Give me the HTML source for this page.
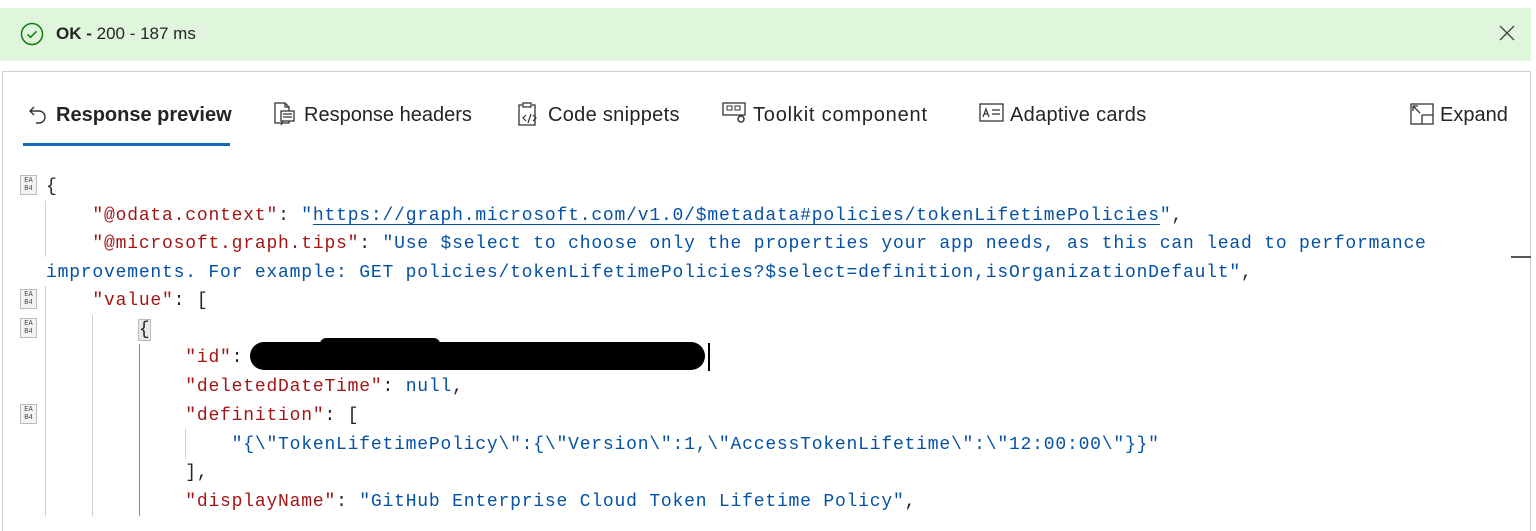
<!DOCTYPE html>
<html><head><meta charset="utf-8"><style>
*{margin:0;padding:0;box-sizing:border-box}
body{width:1536px;height:515px;background:#fff;position:relative;overflow:hidden;font-family:"Liberation Sans",sans-serif;color:#242424}
.banner{position:absolute;left:0;top:8px;width:1531px;height:53px;background:#dff6dd}
.panel{position:absolute;left:2px;top:71px;width:1529px;height:460px;border:1px solid #d1d1d1;border-bottom:none}
.tab{position:absolute;top:102px;font-size:20px;white-space:nowrap;line-height:26px}
.code{position:absolute;font-family:"Liberation Mono",monospace;font-size:18px;letter-spacing:0.8px;white-space:pre;line-height:28px}
.k{color:#a31515}.s{color:#0451a5}
.fold{position:absolute;left:20px;width:17px;height:20px;border:1px solid #bbb;background:#f3f3f3;font-size:7px;line-height:8px;font-family:"Liberation Mono",monospace;text-align:center;color:#444;padding-top:1px}
.g{position:absolute;width:1px;background:#d0d0d0}
</style></head><body>
<div class="banner"></div>
<svg style="position:absolute;left:20px;top:22px" width="24" height="24" viewBox="0 0 24 24"><circle cx="12" cy="12" r="10.5" fill="none" stroke="#107c10" stroke-width="1.5"/><path d="M7.5 12.3l3 3 6-6" fill="none" stroke="#107c10" stroke-width="1.5"/></svg>
<div style="position:absolute;left:56px;top:24px;font-size:17px;line-height:20px"><b>OK -</b> 200 - 187 ms</div>
<svg style="position:absolute;left:1499px;top:25px" width="16" height="16"><path d="M1 1L15 15M15 1L1 15" stroke="#444" stroke-width="1.3"/></svg>
<div class="panel"></div>

<svg style="position:absolute;left:27px;top:103px" width="22" height="22" viewBox="0 0 22 22"><path d="M7 4L3 8l4 4M3 8h9a6 6 0 010 12h-3" fill="none" stroke="#333" stroke-width="1.4"/></svg>
<div class="tab" style="left:56px;font-weight:bold">Response preview</div>
<div style="position:absolute;left:23px;top:143px;width:207px;height:3px;background:#0f6cbd"></div>
<svg style="position:absolute;left:273px;top:101px" width="24" height="26" viewBox="0 0 24 26"><path d="M2 2h10l4 4v16H2zM12 2v4h4" fill="none" stroke="#333" stroke-width="1.3"/><rect x="8" y="10" width="13" height="10" fill="#fff" stroke="#333" stroke-width="1.3"/><path d="M10 13h9M10 16h9M10 20l-2 4" stroke="#333" stroke-width="1.2"/></svg>
<div class="tab" style="left:304px">Response headers</div>
<svg style="position:absolute;left:517px;top:101px" width="26" height="26" viewBox="0 0 26 26"><path d="M5 4h-3v20h16V4h-3M6 2h8v4H6z" fill="none" stroke="#333" stroke-width="1.3"/><path d="M9 14l-3 3 3 3M14 13l-3 9M16 14l3 3-3 3" fill="none" stroke="#333" stroke-width="1.2"/></svg>
<div class="tab" style="left:548px;letter-spacing:0.3px">Code snippets</div>
<svg style="position:absolute;left:722px;top:101px" width="28" height="24" viewBox="0 0 28 24"><rect x="1" y="2" width="22" height="12" fill="none" stroke="#333" stroke-width="1.3"/><rect x="5" y="5" width="5" height="4" fill="none" stroke="#333"/><rect x="13" y="5" width="5" height="4" fill="none" stroke="#333"/><circle cx="19" cy="18" r="3" fill="#fff" stroke="#333" stroke-width="1.5"/></svg>
<div class="tab" style="left:753px;letter-spacing:0.8px">Toolkit component</div>
<svg style="position:absolute;left:979px;top:103px" width="26" height="20" viewBox="0 0 26 20"><rect x="1" y="1" width="23" height="17" fill="none" stroke="#333" stroke-width="1.3"/><path d="M4 14l3-8 3 8M5 11h4M13 7h8M13 11h8" fill="none" stroke="#333" stroke-width="1.2"/></svg>
<div class="tab" style="left:1010px;letter-spacing:0.3px">Adaptive cards</div>
<svg style="position:absolute;left:1410px;top:103px" width="24" height="22" viewBox="0 0 24 22"><rect x="1" y="1" width="22" height="20" fill="none" stroke="#333" stroke-width="1.3"/><path d="M3 3l7 7M3 3h5M3 3v5M12 12h11M12 12v9" fill="none" stroke="#333" stroke-width="1.3"/></svg>
<div class="tab" style="left:1440px">Expand</div>

<div class="fold" style="top:175px">EA<br>B4</div>
<div class="fold" style="top:289px">EA<br>B4</div>
<div class="fold" style="top:318px">EA<br>B4</div>
<div class="fold" style="top:404px">EA<br>B4</div>

<div class="g" style="left:45px;top:201px;height:56px"></div>
<div class="g" style="left:45px;top:286px;height:230px"></div>
<div class="g" style="left:92px;top:315px;height:201px"></div>
<div class="g" style="left:139px;top:344px;height:172px;background:#888"></div>
<div class="g" style="left:185px;top:429px;height:30px"></div>
<div style="position:absolute;left:1511px;top:256px;width:20px;height:2px;background:#555"></div>

<div class="code" style="left:46px;top:173px">{</div>
<div class="code" style="left:46px;top:202px">    <span class="k">"@odata.context"</span>: <span class="s">"<u style="text-decoration-color:#0451a5;text-underline-offset:4px">https://graph.microsoft.com/v1.0/$metadata#policies/tokenLifetimePolicies</u>"</span>,</div>
<div class="code" style="left:46px;top:230px">    <span class="k">"@microsoft.graph.tips"</span>: <span class="s">"Use $select to choose only the properties your app needs, as this can lead to performance</span></div>
<div class="code" style="left:46px;top:259px"><span class="s">improvements. For example: GET policies/tokenLifetimePolicies?$select=definition,isOrganizationDefault"</span>,</div>
<div class="code" style="left:46px;top:287px">    <span class="k">"value"</span>: [</div>
<div class="code" style="left:46px;top:316px">        <span style="background:#e8e8e8;outline:1px solid #bbb">{</span></div>
<div class="code" style="left:46px;top:344px">            <span class="k">"id"</span>:                                      ,</div>
<div style="position:absolute;left:250px;top:342px;width:455px;height:28px;background:#000;border-radius:14px"></div>
<div style="position:absolute;left:320px;top:338px;width:120px;height:12px;background:#000;border-radius:8px"></div>
<div style="position:absolute;left:708px;top:343px;width:2px;height:28px;background:#000"></div>
<div class="code" style="left:46px;top:373px">            <span class="k">"deletedDateTime"</span>: <span class="s">null</span>,</div>
<div class="code" style="left:46px;top:402px">            <span class="k">"definition"</span>: [</div>
<div class="code" style="left:46px;top:431px">                <span class="s">"{\"TokenLifetimePolicy\":{\"Version\":1,\"AccessTokenLifetime\":\"12:00:00\"}}"</span></div>
<div class="code" style="left:46px;top:459px">            ],</div>
<div class="code" style="left:46px;top:488px">            <span class="k">"displayName"</span>: <span class="s">"GitHub Enterprise Cloud Token Lifetime Policy"</span>,</div>
</body></html>
